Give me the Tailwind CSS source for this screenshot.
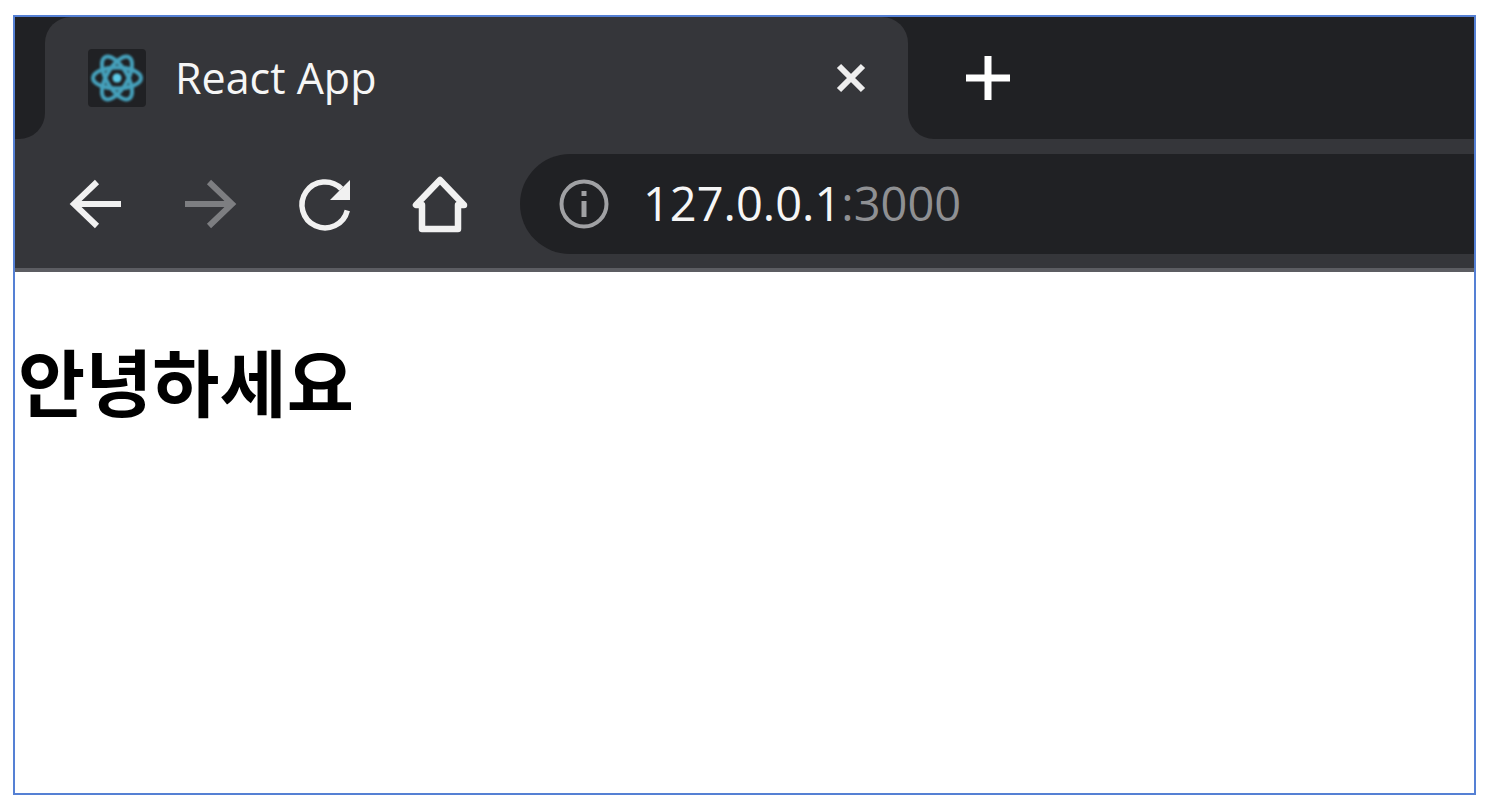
<!DOCTYPE html>
<html lang="ko">
<head>
<meta charset="utf-8">
<title>React App</title>
<script src="https://cdn.jsdelivr.net/npm/@tailwindcss/browser@4"></script>
</head>
<body class="bg-white overflow-hidden">
<div class="ml-[13px] mt-[15px] w-[1463px] h-[780px] border-2 border-[#5580d4] flex flex-col overflow-hidden">
  <div class="h-[122px] shrink-0 flex bg-[#35363a]">
    <div class="w-[30px] shrink-0 bg-[#202124] rounded-br-[26px]"></div>
    <div class="w-[863px] shrink-0 bg-[#202124]">
      <div class="h-full bg-[#35363a] rounded-t-[26px] flex items-center pl-[43px] pr-[41px]">
        <div class="w-[58px] h-[58px] bg-[#202124] rounded-[4px] flex items-center justify-center shrink-0">
          <svg class="blur-[1px]" width="54" height="54" viewBox="0 0 54 54" fill="none" stroke="#45a0bb" stroke-width="4">
            <ellipse cx="27" cy="27" rx="24" ry="10.5"/>
            <ellipse cx="27" cy="27" rx="24" ry="10.5" transform="rotate(60 27 27)"/>
            <ellipse cx="27" cy="27" rx="24" ry="10.5" transform="rotate(120 27 27)"/>
            <circle cx="27" cy="27" r="4.5" fill="#5ccbe8" stroke="none"/>
          </svg>
        </div>
        <span class="ml-[29px] -mt-[2px] text-[43px] leading-none text-[#f6f6f6] font-['Open_Sans',sans-serif]">React App</span>
        <svg class="ml-auto blur-[0.5px]" width="32" height="32" viewBox="0 0 32 32" fill="none" stroke="#eeeeee" stroke-width="6">
          <path d="M4 4 L28 28 M28 4 L4 28"/>
        </svg>
      </div>
    </div>
    <div class="flex-1 bg-[#202124] rounded-bl-[26px] flex items-center pl-[58px]">
      <svg class="blur-[0.5px]" width="44" height="44" viewBox="0 0 44 44" fill="none" stroke="#ffffff" stroke-width="7">
        <path d="M22 0 V44 M0 22 H44"/>
      </svg>
    </div>
  </div>
  <div class="h-[133px] shrink-0 bg-[#35363a] border-b-4 border-[#5c5d62] flex items-center pl-[50px]">
    <div class="flex items-center gap-[55px] shrink-0">
      <svg class="blur-[0.5px]" width="60" height="60" viewBox="0 0 60 60" fill="none" stroke="#f1f1f1" stroke-width="6">
        <path d="M56 30 H9 M32 8 L9 30 L32 52"/>
      </svg>
      <svg class="blur-[0.5px]" width="60" height="60" viewBox="0 0 60 60" fill="none" stroke="#7d7e81" stroke-width="6">
        <path d="M5 30 H52 M29 8 L52 30 L29 52"/>
      </svg>
      <svg class="blur-[0.5px]" width="60" height="60" viewBox="0 0 60 60" fill="none">
        <path d="M46.3 14.7 A23 23 0 1 0 52.3 36.5" stroke="#f1f1f1" stroke-width="5.5"/>
        <path d="M55 6 V26 H35 Z" fill="#f1f1f1"/>
      </svg>
      <svg class="blur-[0.5px]" width="60" height="60" viewBox="0 0 60 60" fill="none" stroke="#f1f1f1" stroke-width="6.5" stroke-linejoin="round">
        <path d="M30 6 L6 31 H12 V55 H48 V31 H54 Z"/>
      </svg>
    </div>
    <div class="ml-[50px] flex-1 h-[100px] bg-[#202124] rounded-l-[50px] flex items-center pl-[38px]">
      <svg class="blur-[0.5px]" width="52" height="52" viewBox="0 0 52 52" fill="none" stroke="#a0a1a4" stroke-width="4">
        <circle cx="26" cy="26" r="22.5"/>
        <path d="M26 23 V39" stroke-width="5"/>
        <path d="M26 13 V18" stroke-width="5"/>
      </svg>
      <span class="ml-[33px] text-[47px] leading-none font-['Open_Sans',sans-serif] text-[#f6f6f6]">127.0.0.1<span class="text-[#8f9093]">:3000</span></span>
    </div>
  </div>
  <div class="flex-1 bg-white pt-[64px] pl-[3px]">
    <h1 class="text-[73px] leading-[1.2] font-semibold text-black font-['Noto_Sans_CJK_KR',sans-serif]">안녕하세요</h1>
  </div>
</div>
</body>
</html>
